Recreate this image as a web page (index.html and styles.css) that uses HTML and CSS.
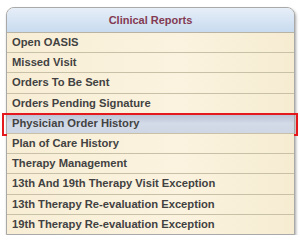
FILE: index.html
```html
<!DOCTYPE html>
<html lang="en">
<head>
  <meta charset="UTF-8" />
  <title>Clinical Reports</title>
  <link rel="stylesheet" href="styles.css">
</head>
<body>

<div class="panel">
  <div class="panel-head">Clinical Reports</div>
  <ul class="report-list">
    <li>Open OASIS</li>
    <li>Missed Visit</li>
    <li>Orders To Be Sent</li>
    <li>Orders Pending Signature</li>
    <li class="active">Physician Order History</li>
    <li>Plan of Care History</li>
    <li>Therapy Management</li>
    <li>13th And 19th Therapy Visit Exception</li>
    <li>13th Therapy Re-evaluation Exception</li>
    <li>19th Therapy Re-evaluation Exception</li>
  </ul>
</div>

</body>
</html>
```

FILE: styles.css
```css
body {
  margin: 0;
  background: #fff;
  font-family: 'Liberation Sans', Arial, sans-serif;
}

.panel {
  margin: 7px 0 0 6px;
  width: 287px;
  border: 1px solid #a9a9a9;
  border-radius: 8px 8px 0 0;
  box-shadow: 1px 2px 3px rgba(0,0,0,0.35);
  background: #fbf4e0;
}

.panel-head {
  height: 24px;
  line-height: 25px;
  text-align: center;
  font-size: 11px;
  font-weight: bold;
  color: #833a52;
  border-radius: 7px 7px 0 0;
  background: linear-gradient(to bottom, #e6eef8, #c8dbef);
  border-bottom: 1px solid #b9b3a3;
}

.report-list {
  list-style: none;
  margin: 0;
  padding: 0;
}

.report-list li {
  position: relative;
  height: 19.2px;
  line-height: 19px;
  padding-left: 5px;
  font-size: 11.2px;
  font-weight: bold;
  color: #424242;
  background: linear-gradient(to right, #f8eed6, #fbf3df 60%, #f6ecd2);
  border-bottom: 1px solid #c9c0a8;
}

.report-list li:last-child {
  border-bottom: none;
}

.report-list li.active {
  background: linear-gradient(to bottom, #b9c1d3, #d3dbe9 50%, #cfd6e4);
}

.report-list li.active::after {
  content: "";
  position: absolute;
  top: -1px;
  left: -5px;
  right: -4px;
  bottom: -3px;
  border: 2px solid #e3191e;
}
```
